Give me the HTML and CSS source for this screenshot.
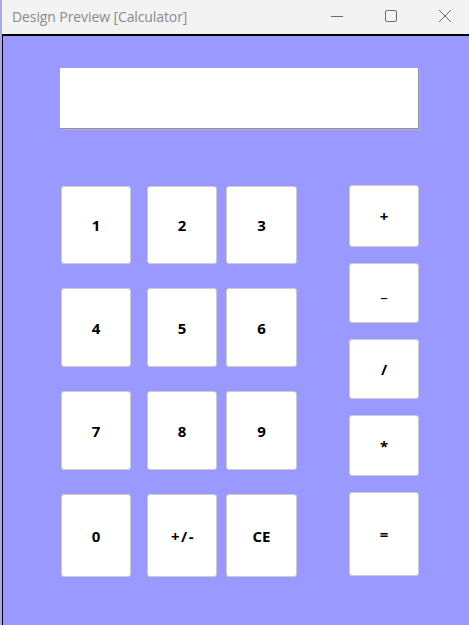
FILE: index.html
```html
<!DOCTYPE html>
<html>
<head>
<meta charset="utf-8">
<link rel="stylesheet" href="styles.css">
</head>
<body>
<div class="window">
  <div class="titlebar">
    <span class="title">Design Preview [Calculator]</span>
    <div class="controls">
      <svg class="ctl min" width="14" height="14" viewBox="0 0 14 14"><line x1="1" y1="7.5" x2="13" y2="7.5" stroke="#6b6b6b" stroke-width="1"/></svg>
      <svg class="ctl max" width="14" height="14" viewBox="0 0 14 14"><rect x="1.5" y="1.5" width="11" height="11" rx="1.5" fill="none" stroke="#6b6b6b" stroke-width="1"/></svg>
      <svg class="ctl close" width="14" height="14" viewBox="0 0 14 14"><path d="M1 1 L13 13 M13 1 L1 13" stroke="#6b6b6b" stroke-width="1" fill="none"/></svg>
    </div>
  </div>
  <div class="content">
    <div class="display"></div>
    <div class="keypad">
      <div class="digits">
        <button class="key">1</button>
        <button class="key">2</button>
        <button class="key wide">3</button>
        <button class="key">4</button>
        <button class="key">5</button>
        <button class="key wide">6</button>
        <button class="key">7</button>
        <button class="key">8</button>
        <button class="key wide">9</button>
        <button class="key">0</button>
        <button class="key pm">+/-</button>
        <button class="key wide">CE</button>
      </div>
      <div class="ops">
        <button class="key op h62">+</button>
        <button class="key op h60 minus">–</button>
        <button class="key op h60">/</button>
        <button class="key op h61">*</button>
        <button class="key op h84">=</button>
      </div>
    </div>
  </div>
</div>
</body>
</html>
```
FILE: styles.css
```css
html, body {
  margin: 0;
  padding: 0;
}
body {
  width: 469px;
  height: 625px;
  overflow: hidden;
  background: #a9a9e6;
  font-family: "Open Sans", "Noto Sans", "Liberation Sans", sans-serif;
}
.window {
  margin-left: 2px;
  height: 625px;
  display: flex;
  flex-direction: column;
}
.titlebar {
  height: 34px;
  background: #f3f3f3;
  display: flex;
  align-items: center;
  padding-left: 10px;
}
.title {
  font-size: 14px;
  color: #8a8a8a;
  letter-spacing: -0.1px;
  margin-top: -1px;
}
.controls {
  margin-left: auto;
  display: flex;
  align-items: center;
  margin-top: -2px;
}
.ctl {
  display: block;
}
.min { margin-right: 40px; }
.max { margin-right: 40px; }
.close { margin-right: 17px; }
.content {
  flex: 1;
  background: #9999ff;
  border-top: 2px solid #000;
  border-left: 1px solid #000;
  padding: 32px 0 0 57px;
  display: flex;
  flex-direction: column;
}
.display {
  width: 358px;
  height: 60px;
  background: #fff;
  box-shadow: 1px 1px 0 #8f8f8f, 2px 2px 0 #b0b0d8;
}
.keypad {
  margin-top: 57px;
  display: flex;
  align-items: flex-start;
}
.digits {
  margin-top: 1px;
  margin-left: 1px;
  display: grid;
  grid-template-columns: 86px 79px 71px;
  grid-template-rows: 78px 79px 79px 83px;
  row-gap: 24px;
}
.key {
  box-sizing: border-box;
  width: 70px;
  height: 100%;
  margin: 0;
  padding: 0;
  background: #fff;
  border: 1px solid #cccccc;
  border-radius: 3px;
  font-family: "Open Sans", "Noto Sans", "Liberation Sans", sans-serif;
  font-weight: 700;
  font-size: 15px;
  color: #000;
  display: flex;
  align-items: center;
  justify-content: center;
}
.key.wide { width: 71px; }
.key.pm { letter-spacing: 1.5px; padding-left: 2px; }
.ops {
  margin-left: 52px;
  display: flex;
  flex-direction: column;
  gap: 16px;
}
.op { width: 70px; }
.minus { padding-top: 8px; font-weight: 400; }
.h62 { height: 62px; }
.h60 { height: 60px; }
.h61 { height: 61px; }
.h84 { height: 84px; }
```
